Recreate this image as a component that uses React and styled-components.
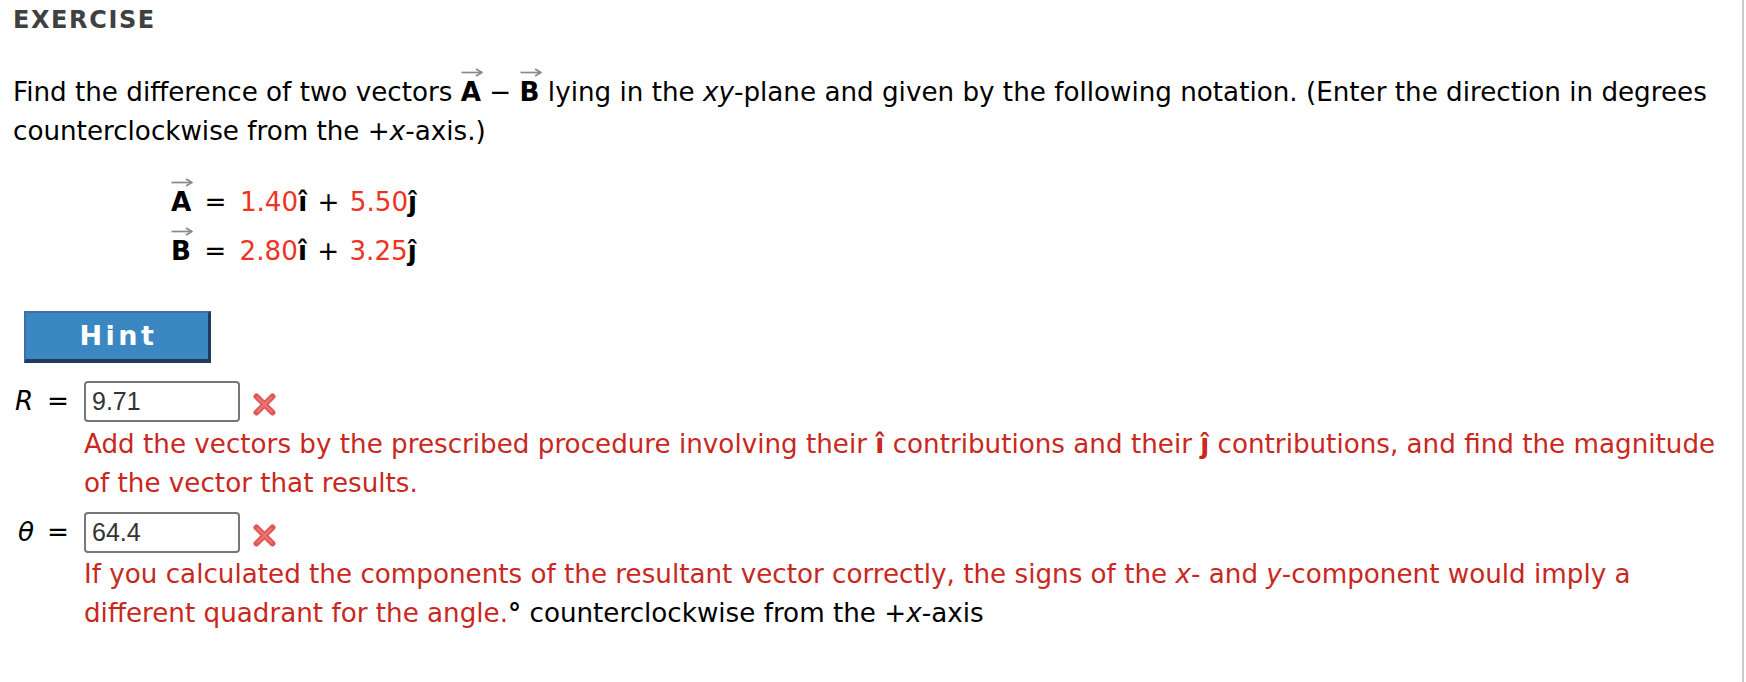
import React from "react";
import styled, { createGlobalStyle } from "styled-components";

const GlobalStyle = createGlobalStyle`
  html, body { margin: 0; padding: 0; background: #fff; }
  body { font-family: "DejaVu Sans", Verdana, sans-serif; }
`;

const Page = styled.div`
  box-sizing: border-box;
  width: 1744px;
  min-height: 682px;
  border-right: 2px solid #cbcbcb;
  padding: 5px 20px 0 13px;
  font-size: 26.2px;
  line-height: 39px;
  color: #000;
`;

const Title = styled.h1`
  margin: 0;
  font-size: 24px;
  line-height: 30px;
  font-weight: bold;
  letter-spacing: 1.6px;
  color: #404040;
`;

const Para = styled.p`
  margin: 38px 0 0;
`;

const Vec = styled.b`
  position: relative;
  font-weight: bold;
`;

const Arrow = styled.svg`
  position: absolute;
  left: 0;
  top: -9.5px;
  width: 22px;
  height: 9px;
  overflow: visible;
`;

const VecList = styled.div`
  margin: 27px 0 0 158px;
`;

const VecRow = styled.div`
  line-height: 49px;
  white-space: nowrap;
`;

const Eq = styled.span`
  margin: 0 5px;
`;

const Num = styled.span`
  color: #ec3424;
`;

const Hat = styled.b`
  font-weight: bold;
`;

const Plus = styled.span`
  margin: 0 2px;
`;

const HintButton = styled.button`
  display: block;
  margin: 34.5px 0 0 11px;
  box-sizing: border-box;
  width: 187px;
  height: 52px;
  padding: 0 0 0 3px;
  background: #3b87c1;
  border-style: solid;
  border-width: 2px 3px 4px 2px;
  border-color: #3f6ea5 #1f3b5e #1f3b5e #3f6ea5;
  color: #fff;
  font-family: "DejaVu Sans", Verdana, sans-serif;
  font-size: 27px;
  font-weight: bold;
  letter-spacing: 3.5px;
  cursor: pointer;
`;

const AnswerRow = styled.div`
  display: flex;
  align-items: center;
  height: 41px;
  margin-top: ${(p) => p.$top}px;
`;

const Label = styled.i`
  box-sizing: border-box;
  width: 34px;
  padding-left: ${(p) => p.$indent}px;
  font-style: italic;
`;

const EqCell = styled.span`
  width: 37px;
`;

const AnswerInput = styled.input`
  box-sizing: border-box;
  width: 156px;
  height: 41px;
  margin: 0;
  padding: 0 0 0 6px;
  border: 2px solid #777;
  border-radius: 4px;
  font-family: "Liberation Sans", Arial, sans-serif;
  font-size: 25px;
  color: #333;
  background: #fff;
  outline: none;
`;

const Mark = styled.svg`
  width: 25px;
  height: 25px;
  margin: 6px 0 0 12px;
`;

const Feedback = styled.div`
  margin: ${(p) => p.$top}px 0 0 71px;
  color: #c8281e;
`;

const Plain = styled.span`
  color: #000;
`;

const VecArrow = () => (
  <Arrow viewBox="0 0 22 9">
    <path d="M0.5 4.5 H20" stroke="#8a8a8a" strokeWidth="1.7" fill="none" />
    <path d="M15 1 L21 4.5 L15 8" stroke="#8a8a8a" strokeWidth="1.7" fill="none" strokeLinejoin="round" />
  </Arrow>
);

const V = ({ children }) => (
  <Vec>
    <VecArrow />
    {children}
  </Vec>
);

const Cross = () => (
  <Mark viewBox="0 0 25 25">
    <path d="M4.5 4.5 L20.5 20.5 M20.5 4.5 L4.5 20.5" stroke="#e05656" strokeWidth="6" strokeLinecap="round" />
    <path d="M5.5 5.5 L19.5 19.5 M19.5 5.5 L5.5 19.5" stroke="#eb7676" strokeWidth="2" strokeLinecap="round" />
  </Mark>
);

export default function App() {
  return (
    <>
      <GlobalStyle />
      <Page>
        <Title>EXERCISE</Title>
        <Para>
          Find the difference of two vectors <V>A</V> − <V>B</V> lying in the <i>xy</i>-plane and given by the
          following notation. (Enter the direction in degrees counterclockwise from the +<i>x</i>-axis.)
        </Para>
        <VecList>
          <VecRow>
            <V>A</V>
            <Eq> = </Eq>
            <Num>1.40</Num>
            <Hat>î</Hat>
            <Plus> + </Plus>
            <Num>5.50</Num>
            <Hat>ĵ</Hat>
          </VecRow>
          <VecRow>
            <V>B</V>
            <Eq> = </Eq>
            <Num>2.80</Num>
            <Hat>î</Hat>
            <Plus> + </Plus>
            <Num>3.25</Num>
            <Hat>ĵ</Hat>
          </VecRow>
        </VecList>
        <HintButton type="button">Hint</HintButton>
        <AnswerRow $top={18}>
          <Label $indent={2}>R</Label>
          <EqCell>=</EqCell>
          <AnswerInput readOnly value="9.71" />
          <Cross />
        </AnswerRow>
        <Feedback $top={3.5}>
          Add the vectors by the prescribed procedure involving their <Hat>î</Hat> contributions and their{" "}
          <Hat>ĵ</Hat> contributions, and find the magnitude of the vector that results.
        </Feedback>
        <AnswerRow $top={8.5}>
          <Label $indent={5}>θ</Label>
          <EqCell>=</EqCell>
          <AnswerInput readOnly value="64.4" />
          <Cross />
        </AnswerRow>
        <Feedback $top={2}>
          If you calculated the components of the resultant vector correctly, the signs of the <i>x</i>- and{" "}
          <i>y</i>-component would imply a different quadrant for the angle.
          <Plain>
            <b>°</b> counterclockwise from the +<i>x</i>-axis
          </Plain>
        </Feedback>
      </Page>
    </>
  );
}
